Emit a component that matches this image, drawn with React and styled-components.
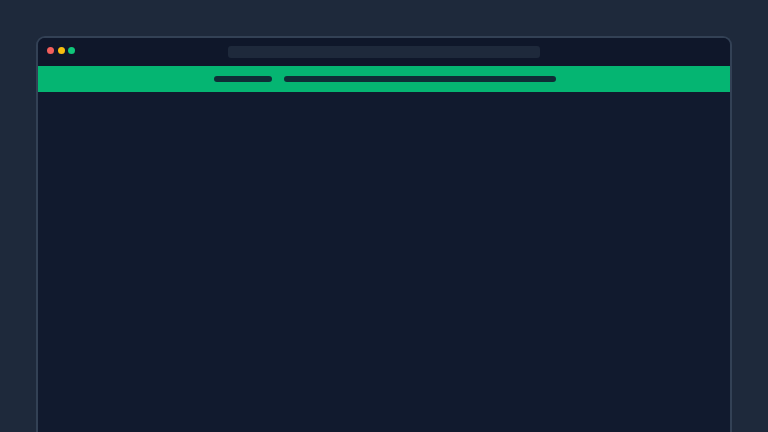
import React from "react";
import styled, { createGlobalStyle } from "styled-components";

const Global = createGlobalStyle`
  html, body { margin: 0; padding: 0; background: #1e293b; overflow: hidden; }
  body { font-family: "Inter", "Liberation Sans", sans-serif; }
`;

const Page = styled.div`
  width: 768px;
  height: 432px;
  box-sizing: border-box;
  padding: 36px 36px 0;
  background: #1e293b;
  overflow: hidden;
`;

const Window = styled.div`
  box-sizing: border-box;
  width: 696px;
  height: 420px;
  border: 2px solid #334155;
  border-bottom: none;
  border-radius: 9px 9px 0 0;
  background: #111a2e;
  overflow: hidden;
  display: flex;
  flex-direction: column;
`;

const TitleBar = styled.div`
  position: relative;
  height: 28px;
  background: #0f172a;
  display: flex;
  align-items: center;
  justify-content: center;
`;

const Dots = styled.div`
  position: absolute;
  left: 9px;
  top: 9px;
  display: flex;
  gap: 3.7px;
`;

const Dot = styled.span`
  width: 7px;
  height: 7px;
  border-radius: 50%;
  background: ${(p) => p.$c};
`;

const Address = styled.div`
  width: 312px;
  height: 12px;
  border-radius: 3px;
  background: #1e293b;
`;

const Band = styled.div`
  height: 26px;
  box-sizing: border-box;
  padding-left: 2px;
  background: #05b572;
  display: flex;
  align-items: center;
  justify-content: center;
  gap: 12px;
`;

const Pill = styled.span`
  width: ${(p) => p.$w}px;
  height: 6px;
  border-radius: 3px;
  background: #0f2d36;
`;

const Content = styled.div`
  flex: 1;
  background: #111a2e;
`;

export default function App() {
  return (
    <Page>
      <Global />
      <Window>
        <TitleBar>
          <Dots>
            <Dot $c="#f25f5c" />
            <Dot $c="#f7be0f" />
            <Dot $c="#10c77a" />
          </Dots>
          <Address />
        </TitleBar>
        <Band>
          <Pill $w={58} />
          <Pill $w={272} />
        </Band>
        <Content />
      </Window>
    </Page>
  );
}
